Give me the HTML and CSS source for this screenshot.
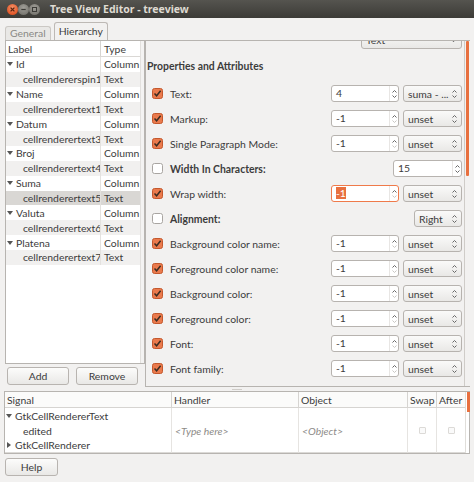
FILE: index.html
```html
<!DOCTYPE html>
<html>
<head>
<meta charset="utf-8">
<link rel="stylesheet" href="styles.css">
</head>
<body>
<div class="window">
  <div class="titlebar">
    <div class="wbtns">
      <span class="wb close"><svg width="11" height="11" viewBox="0 0 11 11"><path d="M3.6 3.6 L7.4 7.4 M7.4 3.6 L3.6 7.4" stroke="#5a2410" stroke-width="1.3"/></svg></span>
      <span class="wb min"><svg width="11" height="11" viewBox="0 0 11 11"><path d="M3.3 5.5 H7.7" stroke="#3c3b37" stroke-width="1.2"/></svg></span>
      <span class="wb max"><svg width="11" height="11" viewBox="0 0 11 11"><rect x="3.5" y="3.5" width="4" height="4" fill="none" stroke="#3c3b37" stroke-width="1"/></svg></span>
    </div>
    <div class="title">Tree View Editor - treeview</div>
  </div>

  <div class="tabs">
    <div class="tab">General</div>
    <div class="tab active">Hierarchy</div>
  </div>

  <div class="page">
    <div class="left">
      <div class="treeframe">
        <div class="tree">
          <div class="trow thead"><div class="c1">Label</div><div class="c2">Type</div></div>
          <div class="trow"><div class="c1 par"><svg class="exp" width="6" height="6" viewBox="0 0 6 6"><path d="M0 1 H6 L3 5 Z"/></svg>Id</div><div class="c2">Column</div></div>
          <div class="trow alt"><div class="c1 child">cellrendererspin1</div><div class="c2">Text</div></div>
          <div class="trow"><div class="c1 par"><svg class="exp" width="6" height="6" viewBox="0 0 6 6"><path d="M0 1 H6 L3 5 Z"/></svg>Name</div><div class="c2">Column</div></div>
          <div class="trow alt"><div class="c1 child">cellrenderertext1</div><div class="c2">Text</div></div>
          <div class="trow"><div class="c1 par"><svg class="exp" width="6" height="6" viewBox="0 0 6 6"><path d="M0 1 H6 L3 5 Z"/></svg>Datum</div><div class="c2">Column</div></div>
          <div class="trow alt"><div class="c1 child">cellrenderertext3</div><div class="c2">Text</div></div>
          <div class="trow"><div class="c1 par"><svg class="exp" width="6" height="6" viewBox="0 0 6 6"><path d="M0 1 H6 L3 5 Z"/></svg>Broj</div><div class="c2">Column</div></div>
          <div class="trow alt"><div class="c1 child">cellrenderertext4</div><div class="c2">Text</div></div>
          <div class="trow"><div class="c1 par"><svg class="exp" width="6" height="6" viewBox="0 0 6 6"><path d="M0 1 H6 L3 5 Z"/></svg>Suma</div><div class="c2">Column</div></div>
          <div class="trow sel"><div class="c1 child">cellrenderertext5</div><div class="c2">Text</div></div>
          <div class="trow"><div class="c1 par"><svg class="exp" width="6" height="6" viewBox="0 0 6 6"><path d="M0 1 H6 L3 5 Z"/></svg>Valuta</div><div class="c2">Column</div></div>
          <div class="trow alt"><div class="c1 child">cellrenderertext6</div><div class="c2">Text</div></div>
          <div class="trow"><div class="c1 par"><svg class="exp" width="6" height="6" viewBox="0 0 6 6"><path d="M0 1 H6 L3 5 Z"/></svg>Platena</div><div class="c2">Column</div></div>
          <div class="trow alt"><div class="c1 child">cellrenderertext7</div><div class="c2">Text</div></div>
        </div>
        <div class="vstrip"></div>
      </div>
      <div class="btnrow">
        <div class="btn add">Add</div>
        <div class="btn remove">Remove</div>
      </div>
    </div>

    <div class="right">
      <div class="scrollarea">
        <div class="props">
          <div class="toprow">
            <div class="combo wide"><span class="ctext">Text</span><svg class="carr" width="7" height="5" viewBox="0 0 7 5"><path d="M0.5 1 L3.5 4 L6.5 1" fill="#555"/></svg></div>
          </div>
          <div class="heading">Properties and Attributes</div>
          <div class="prows">
            <div class="prow">
              <svg class="chk" width="11" height="11" viewBox="0 0 11 11"><rect x="0.5" y="0.5" width="10" height="10" rx="2" class="on"/><path d="M2.5 5.5 L4.6 7.8 L8.6 2.8" class="tick"/></svg>
              <span class="plabel">Text:</span>
              <div class="spin"><span class="sval">4</span><span class="sarr"><svg width="5" height="10" viewBox="0 0 5 10"><path d="M0.5 3.5 L2.5 1.5 L4.5 3.5" class="ar"/><path d="M0.5 6.5 L2.5 8.5 L4.5 6.5" class="ar"/></svg></span></div>
              <div class="combo"><span class="ctext">suma - ...</span><svg class="updn" width="5" height="10" viewBox="0 0 5 10"><path d="M0.5 3.5 L2.5 1.5 L4.5 3.5" class="ar"/><path d="M0.5 6.5 L2.5 8.5 L4.5 6.5" class="ar"/></svg></div>
            </div>
            <div class="prow">
              <svg class="chk" width="11" height="11" viewBox="0 0 11 11"><rect x="0.5" y="0.5" width="10" height="10" rx="2" class="on"/><path d="M2.5 5.5 L4.6 7.8 L8.6 2.8" class="tick"/></svg>
              <span class="plabel">Markup:</span>
              <div class="spin"><span class="sval">-1</span><span class="sarr"><svg width="5" height="10" viewBox="0 0 5 10"><path d="M0.5 3.5 L2.5 1.5 L4.5 3.5" class="ar"/><path d="M0.5 6.5 L2.5 8.5 L4.5 6.5" class="ar dis"/></svg></span></div>
              <div class="combo"><span class="ctext">unset</span><svg class="updn" width="5" height="10" viewBox="0 0 5 10"><path d="M0.5 3.5 L2.5 1.5 L4.5 3.5" class="ar"/><path d="M0.5 6.5 L2.5 8.5 L4.5 6.5" class="ar"/></svg></div>
            </div>
            <div class="prow">
              <svg class="chk" width="11" height="11" viewBox="0 0 11 11"><rect x="0.5" y="0.5" width="10" height="10" rx="2" class="on"/><path d="M2.5 5.5 L4.6 7.8 L8.6 2.8" class="tick"/></svg>
              <span class="plabel">Single Paragraph Mode:</span>
              <div class="spin"><span class="sval">-1</span><span class="sarr"><svg width="5" height="10" viewBox="0 0 5 10"><path d="M0.5 3.5 L2.5 1.5 L4.5 3.5" class="ar"/><path d="M0.5 6.5 L2.5 8.5 L4.5 6.5" class="ar dis"/></svg></span></div>
              <div class="combo"><span class="ctext">unset</span><svg class="updn" width="5" height="10" viewBox="0 0 5 10"><path d="M0.5 3.5 L2.5 1.5 L4.5 3.5" class="ar"/><path d="M0.5 6.5 L2.5 8.5 L4.5 6.5" class="ar"/></svg></div>
            </div>
            <div class="prow">
              <svg class="chk" width="11" height="11" viewBox="0 0 11 11"><rect x="0.5" y="0.5" width="10" height="10" rx="2" class="off"/></svg>
              <span class="plabel bold">Width In Characters:</span>
              <div class="spin wic"><span class="sval">15</span><span class="sarr"><svg width="5" height="10" viewBox="0 0 5 10"><path d="M0.5 3.5 L2.5 1.5 L4.5 3.5" class="ar"/><path d="M0.5 6.5 L2.5 8.5 L4.5 6.5" class="ar"/></svg></span></div>
            </div>
            <div class="prow">
              <svg class="chk" width="11" height="11" viewBox="0 0 11 11"><rect x="0.5" y="0.5" width="10" height="10" rx="2" class="on"/><path d="M2.5 5.5 L4.6 7.8 L8.6 2.8" class="tick"/></svg>
              <span class="plabel">Wrap width:</span>
              <div class="spin focus"><span class="sval"><span class="selected">-1</span></span><span class="sarr"><svg width="5" height="10" viewBox="0 0 5 10"><path d="M0.5 3.5 L2.5 1.5 L4.5 3.5" class="ar"/><path d="M0.5 6.5 L2.5 8.5 L4.5 6.5" class="ar dis"/></svg></span></div>
              <div class="combo"><span class="ctext">unset</span><svg class="updn" width="5" height="10" viewBox="0 0 5 10"><path d="M0.5 3.5 L2.5 1.5 L4.5 3.5" class="ar"/><path d="M0.5 6.5 L2.5 8.5 L4.5 6.5" class="ar"/></svg></div>
            </div>
            <div class="prow">
              <svg class="chk" width="11" height="11" viewBox="0 0 11 11"><rect x="0.5" y="0.5" width="10" height="10" rx="2" class="off"/></svg>
              <span class="plabel bold">Alignment:</span>
              <div class="combo align"><span class="ctext">Right</span><svg class="updn" width="5" height="10" viewBox="0 0 5 10"><path d="M0.5 3.5 L2.5 1.5 L4.5 3.5" class="ar"/><path d="M0.5 6.5 L2.5 8.5 L4.5 6.5" class="ar"/></svg></div>
            </div>
            <div class="prow">
              <svg class="chk" width="11" height="11" viewBox="0 0 11 11"><rect x="0.5" y="0.5" width="10" height="10" rx="2" class="on"/><path d="M2.5 5.5 L4.6 7.8 L8.6 2.8" class="tick"/></svg>
              <span class="plabel">Background color name:</span>
              <div class="spin"><span class="sval">-1</span><span class="sarr"><svg width="5" height="10" viewBox="0 0 5 10"><path d="M0.5 3.5 L2.5 1.5 L4.5 3.5" class="ar"/><path d="M0.5 6.5 L2.5 8.5 L4.5 6.5" class="ar dis"/></svg></span></div>
              <div class="combo"><span class="ctext">unset</span><svg class="updn" width="5" height="10" viewBox="0 0 5 10"><path d="M0.5 3.5 L2.5 1.5 L4.5 3.5" class="ar"/><path d="M0.5 6.5 L2.5 8.5 L4.5 6.5" class="ar"/></svg></div>
            </div>
            <div class="prow">
              <svg class="chk" width="11" height="11" viewBox="0 0 11 11"><rect x="0.5" y="0.5" width="10" height="10" rx="2" class="on"/><path d="M2.5 5.5 L4.6 7.8 L8.6 2.8" class="tick"/></svg>
              <span class="plabel">Foreground color name:</span>
              <div class="spin"><span class="sval">-1</span><span class="sarr"><svg width="5" height="10" viewBox="0 0 5 10"><path d="M0.5 3.5 L2.5 1.5 L4.5 3.5" class="ar"/><path d="M0.5 6.5 L2.5 8.5 L4.5 6.5" class="ar dis"/></svg></span></div>
              <div class="combo"><span class="ctext">unset</span><svg class="updn" width="5" height="10" viewBox="0 0 5 10"><path d="M0.5 3.5 L2.5 1.5 L4.5 3.5" class="ar"/><path d="M0.5 6.5 L2.5 8.5 L4.5 6.5" class="ar"/></svg></div>
            </div>
            <div class="prow">
              <svg class="chk" width="11" height="11" viewBox="0 0 11 11"><rect x="0.5" y="0.5" width="10" height="10" rx="2" class="on"/><path d="M2.5 5.5 L4.6 7.8 L8.6 2.8" class="tick"/></svg>
              <span class="plabel">Background color:</span>
              <div class="spin"><span class="sval">-1</span><span class="sarr"><svg width="5" height="10" viewBox="0 0 5 10"><path d="M0.5 3.5 L2.5 1.5 L4.5 3.5" class="ar"/><path d="M0.5 6.5 L2.5 8.5 L4.5 6.5" class="ar dis"/></svg></span></div>
              <div class="combo"><span class="ctext">unset</span><svg class="updn" width="5" height="10" viewBox="0 0 5 10"><path d="M0.5 3.5 L2.5 1.5 L4.5 3.5" class="ar"/><path d="M0.5 6.5 L2.5 8.5 L4.5 6.5" class="ar"/></svg></div>
            </div>
            <div class="prow">
              <svg class="chk" width="11" height="11" viewBox="0 0 11 11"><rect x="0.5" y="0.5" width="10" height="10" rx="2" class="on"/><path d="M2.5 5.5 L4.6 7.8 L8.6 2.8" class="tick"/></svg>
              <span class="plabel">Foreground color:</span>
              <div class="spin"><span class="sval">-1</span><span class="sarr"><svg width="5" height="10" viewBox="0 0 5 10"><path d="M0.5 3.5 L2.5 1.5 L4.5 3.5" class="ar"/><path d="M0.5 6.5 L2.5 8.5 L4.5 6.5" class="ar dis"/></svg></span></div>
              <div class="combo"><span class="ctext">unset</span><svg class="updn" width="5" height="10" viewBox="0 0 5 10"><path d="M0.5 3.5 L2.5 1.5 L4.5 3.5" class="ar"/><path d="M0.5 6.5 L2.5 8.5 L4.5 6.5" class="ar"/></svg></div>
            </div>
            <div class="prow">
              <svg class="chk" width="11" height="11" viewBox="0 0 11 11"><rect x="0.5" y="0.5" width="10" height="10" rx="2" class="on"/><path d="M2.5 5.5 L4.6 7.8 L8.6 2.8" class="tick"/></svg>
              <span class="plabel">Font:</span>
              <div class="spin"><span class="sval">-1</span><span class="sarr"><svg width="5" height="10" viewBox="0 0 5 10"><path d="M0.5 3.5 L2.5 1.5 L4.5 3.5" class="ar"/><path d="M0.5 6.5 L2.5 8.5 L4.5 6.5" class="ar dis"/></svg></span></div>
              <div class="combo"><span class="ctext">unset</span><svg class="updn" width="5" height="10" viewBox="0 0 5 10"><path d="M0.5 3.5 L2.5 1.5 L4.5 3.5" class="ar"/><path d="M0.5 6.5 L2.5 8.5 L4.5 6.5" class="ar"/></svg></div>
            </div>
            <div class="prow">
              <svg class="chk" width="11" height="11" viewBox="0 0 11 11"><rect x="0.5" y="0.5" width="10" height="10" rx="2" class="on"/><path d="M2.5 5.5 L4.6 7.8 L8.6 2.8" class="tick"/></svg>
              <span class="plabel">Font family:</span>
              <div class="spin"><span class="sval">-1</span><span class="sarr"><svg width="5" height="10" viewBox="0 0 5 10"><path d="M0.5 3.5 L2.5 1.5 L4.5 3.5" class="ar"/><path d="M0.5 6.5 L2.5 8.5 L4.5 6.5" class="ar dis"/></svg></span></div>
              <div class="combo"><span class="ctext">unset</span><svg class="updn" width="5" height="10" viewBox="0 0 5 10"><path d="M0.5 3.5 L2.5 1.5 L4.5 3.5" class="ar"/><path d="M0.5 6.5 L2.5 8.5 L4.5 6.5" class="ar"/></svg></div>
            </div>
          </div>
        </div>
      </div>
      <div class="rscroll"><div class="thumb"></div></div>
    </div>
  </div>

  <div class="handle"><span></span></div>

  <div class="signals">
    <div class="sgrid">
      <div class="sh">Signal</div><div class="sh">Handler</div><div class="sh">Object</div><div class="sh">Swap</div><div class="sh last">After</div>
      <div class="sc sig"><svg class="exp" width="6" height="6" viewBox="0 0 6 6"><path d="M0 1 H6 L3 5 Z"/></svg>GtkCellRendererText</div><div class="sc"></div><div class="sc"></div><div class="sc"></div><div class="sc last"></div>
      <div class="sc sig child2">edited</div><div class="sc hint">&lt;Type here&gt;</div><div class="sc hint">&lt;Object&gt;</div><div class="sc mid"><span class="mini"></span></div><div class="sc mid last"><span class="mini"></span></div>
      <div class="sc sig"><svg class="exp" width="6" height="6" viewBox="0 0 6 6"><path d="M1 0 V6 L5 3 Z"/></svg>GtkCellRenderer</div><div class="sc"></div><div class="sc"></div><div class="sc"></div><div class="sc last"></div>
    </div>
    <div class="sscroll"><div class="thumb2"></div></div>
  </div>

  <div class="footer">
    <div class="btn help">Help</div>
  </div>
</div>
</body>
</html>
```

FILE: styles.css
```css
* { box-sizing: border-box; }
html, body { margin: 0; padding: 0; }
body {
  width: 474px;
  height: 482px;
  overflow: hidden;
  background: #f2f1f0;
  font-family: "Lato", "Noto Sans", sans-serif;
  font-size: 10.4px;
  color: #3c3c3c;
}
.window { width: 474px; height: 482px; display: flex; flex-direction: column; }

/* title bar */
.titlebar {
  height: 18px;
  flex: none;
  display: flex;
  align-items: center;
  padding-left: 7px;
  background: linear-gradient(#55544f, #3c3b37);
}
.wbtns { display: flex; gap: 0; }
.wb { width: 11px; height: 11px; border-radius: 50%; display: block; }
.wb svg { display: block; }
.close { background: radial-gradient(circle at 50% 35%, #f6946a, #e2582a 70%, #b94418); }
.min, .max { background: radial-gradient(circle at 50% 35%, #a19f99, #7b7973 70%, #5f5d58); }
.title {
  margin-left: 10px;
  font-family: "Noto Sans", sans-serif;
  font-weight: bold;
  font-size: 10.5px;
  color: #dfdbd2;
}

/* tabs */
.tabs {
  height: 22px;
  flex: none;
  display: flex;
  align-items: flex-end;
  padding-left: 5px;
  gap: 3px;
}
.tab {
  height: 14px;
  line-height: 13px;
  padding: 0 4px;
  color: #8a8885;
  background: #e9e8e6;
  border: 1px solid #cbc8c4;
  border-bottom: none;
  border-radius: 3px 3px 0 0;
}
.tab.active {
  height: 18px;
  line-height: 17px;
  color: #3c3c3c;
  background: #f2f1f0;
  border-color: #bdb9b5;
}

/* page */
.page {
  height: 348px;
  flex: none;
  display: flex;
  padding: 0 4px 0 5px;
}
.left { width: 140px; flex: none; display: flex; flex-direction: column; }
.treeframe {
  height: 324px;
  display: flex;
  border: 1px solid #b7b4b0;
  background: #fff;
}
.tree { flex: 1; }
.vstrip { width: 4px; background: #f4f3f2; border-left: 1px solid #e2e0dd; }
.trow { height: 14.85px; display: flex; align-items: center; white-space: nowrap; }
.trow.thead { height: 16px; border-bottom: 1px solid #dad8d5; }
.c1 { width: 95px; height: 100%; display: flex; align-items: center; padding-left: 2px; border-right: 1px solid #e4e2df; overflow: hidden; }
.c2 { flex: 1; padding-left: 3px; }
.thead .c1 { border-right-color: #d6d4d1; }
.trow.alt { background: #f1f0ef; }
.trow.sel { background: #d9d7d4; }
.c1.par { padding-left: 1px; }
.exp { fill: #555; margin-right: 3px; flex: none; }
.c1.child { padding-left: 17px; }

.btnrow { display: flex; gap: 7px; padding-left: 2px; margin-top: 3px; }
.btn {
  height: 18px;
  line-height: 16px;
  text-align: center;
  border: 1px solid #b8b4b0;
  border-radius: 3px;
  background: linear-gradient(#fcfcfb, #e9e8e6);
  color: #3c3c3c;
}
.btn.add, .btn.remove { width: 62px; }

/* right panel */
.right {
  flex: 1;
  display: flex;
  border: 1px solid #b7b4b0;
  border-right: none;
  background: #f2f1f0;
  height: 347px;
}
.scrollarea { flex: 1; overflow: hidden; border-right: 1px solid #cfccc8; }
.rscroll { width: 5px; background: #f2f1f0; }
.thumb { width: 3px; height: 135px; margin-left: 1px; background: #e8703f; border-radius: 1px; }

.props { padding-left: 1px; padding-right: 2px; }
.toprow { display: flex; justify-content: flex-end; margin-top: -10px; }
.heading { margin-top: 9px; height: 16px; line-height: 16px; font-weight: bold; }
.prows { margin-top: 7px; }
.prow { height: 25px; display: flex; align-items: center; }
.chk { margin-left: 5px; flex: none; display: block; }
.chk .on { fill: #ea7a4c; stroke: #c4582d; stroke-width: 1; }
.chk .off { fill: #ffffff; stroke: #a9a5a1; stroke-width: 1; }
.chk .tick { fill: none; stroke: #3a2c22; stroke-width: 1.5; }
.plabel { margin-left: 7px; flex: 1; white-space: nowrap; }
.plabel.bold { font-weight: bold; }

.spin {
  width: 68px;
  height: 17px;
  flex: none;
  display: flex;
  background: #fff;
  border: 1px solid #b7b3af;
  border-radius: 3px;
}
.spin.wic { width: 69px; }
.spin.focus { border-color: #ef7a4a; }
.sval { flex: 1; padding-left: 4px; line-height: 15px; }
.selected { background: #e8703f; color: #fff; }
.sarr { width: 9px; border-left: 1px solid #e8e6e4; display: flex; align-items: center; justify-content: center; }
.sarr svg { display: block; }
.ar { fill: none; stroke: #666; stroke-width: 1; }
.ar.dis { stroke: #c8c6c3; }

.combo {
  width: 59px;
  height: 17px;
  flex: none;
  margin-left: 4px;
  display: flex;
  align-items: center;
  border: 1px solid #b7b3af;
  border-radius: 3px;
  background: linear-gradient(#fafaf9, #e9e8e6);
  padding: 0 4px 0 4px;
}
.combo.wide { width: 101px; height: 18px; }
.combo.align { width: 48px; }
.ctext { flex: 1; white-space: nowrap; overflow: hidden; }
.updn { display: block; flex: none; }
.carr { display: block; flex: none; }

/* handle */
.handle { height: 3px; flex: none; display: flex; justify-content: center; }
.handle span { width: 10px; height: 1px; margin-top: 1px; background: #cfccc8; }

/* signals */
.signals {
  height: 63px;
  flex: none;
  margin: 0 4px 0 4px;
  display: flex;
  border: 1px solid #b7b4b0;
  background: #fff;
}
.sgrid {
  display: grid;
  grid-template-columns: 167px 127px 109px 29px 28px;
  grid-template-rows: 16px 15px 15px 15px;
  flex: none;
}
.sh {
  border-bottom: 1px solid #d6d4d1;
  border-right: 1px solid #d6d4d1;
  padding-left: 2px;
  line-height: 16px;
  background: #fbfbfa;
  white-space: nowrap;
}
.sh.last { border-right: none; }
.sc { border-right: 1px solid #e6e4e1; display: flex; align-items: center; padding-left: 3px; white-space: nowrap; }
.sc.last { border-right: none; }
.sc.sig { padding-left: 1px; }
.sc.child2 { padding-left: 18px; }
.sc.hint { font-style: italic; color: #8d8b88; }
.sc.mid { justify-content: center; padding-left: 0; }
.mini { width: 7px; height: 7px; border: 1px solid #dcdad7; border-radius: 1px; background: #fafafa; }
.sgrid > .sc:nth-last-child(-n+5) { border-bottom: 1px solid #dcdad7; }
.sscroll { flex: 1; border-left: 1px solid #e0deda; }
.thumb2 { width: 3px; height: 20px; margin-left: 1px; background: #e8703f; }

/* footer */
.footer { padding: 4px 0 0 5px; }
.btn.help { width: 53px; height: 18px; }
```
